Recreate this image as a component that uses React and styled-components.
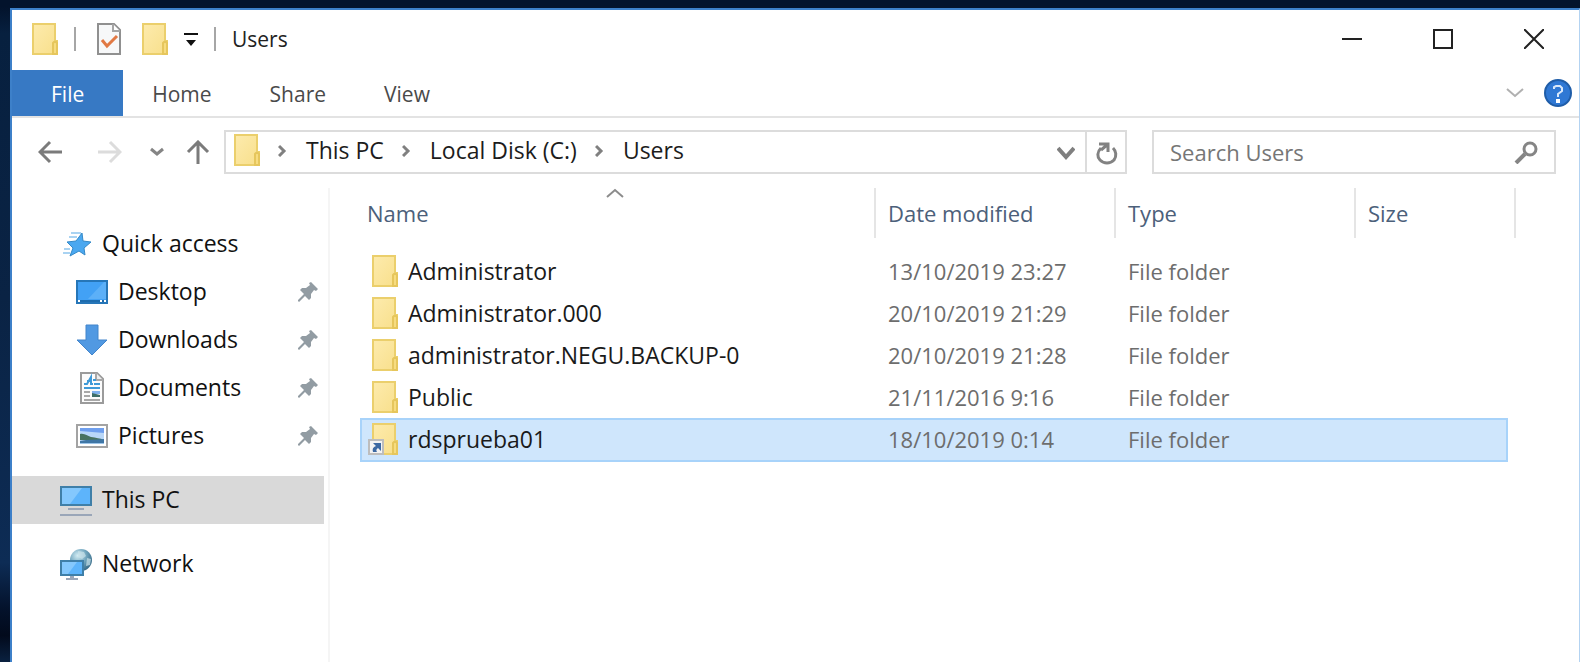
import React, { useState } from "react";
import styled, { createGlobalStyle } from "styled-components";

const GlobalStyle = createGlobalStyle`
  * {
    box-sizing: border-box;
  }
  body {
    margin: 0;
    background: linear-gradient(#03132c 1%, #07203f 5%, #0a2344 45%, #0d2c55 85%, #04122b 92%, #020a1c 96%, #0a2140);
    font-family: "Open Sans", "Noto Sans", sans-serif;
    font-size: 22px;
    line-height: 30px;
    color: #111;
    overflow: hidden;
  }
  button, input {
    font: inherit;
    color: inherit;
    border: none;
    background: none;
    padding: 0;
    margin: 0;
  }
  svg {
    display: block;
    flex: none;
  }
`;

const ExplorerWindow = styled.div`
  display: flex;
  flex-direction: column;
  min-height: calc(100vh - 8px);
  margin: 8px 0 0 10px;
  border-top: 2px solid #3d80c9;
  border-left: 2px solid #3d80c9;
  border-right: 1px solid #b3d3f2;
  background: #fff;
`;

const TitleBar = styled.header`
  display: flex;
  align-items: center;
  height: 60px;
  padding: 0 0 2px 20px;
`;

const QuickTools = styled.div`
  display: flex;
  align-items: center;
  gap: 16px;
`;

const Separator = styled.span`
  width: 2px;
  height: 24px;
  background: #a6a6a6;
`;

const IconButton = styled.button`
  display: flex;
  align-items: center;
  justify-content: center;
  cursor: pointer;
`;

const ToolButton = styled(IconButton)`
  padding: 0 4px;
`;

const Title = styled.h1`
  margin: 0;
  font-size: 21px;
  font-weight: 400;
  color: #222;
`;

const WindowControls = styled.div`
  display: flex;
  margin-left: auto;
  height: 100%;
`;

const ControlButton = styled(IconButton)`
  width: 91px;
  &:hover {
    background: #e5e5e5;
  }
`;

const Ribbon = styled.nav`
  display: flex;
  height: 48px;
  border-bottom: 2px solid #e3e3e3;
`;

const RibbonTab = styled.button`
  padding: ${({ $primary }) => ($primary ? "2px 39px 0" : "2px 29px 0")};
  font-size: 21px;
  color: ${({ $primary }) => ($primary ? "#fff" : "#4a4a4a")};
  background: ${({ $primary }) => ($primary ? "#3779c4" : "transparent")};
  cursor: pointer;
`;

const RibbonTools = styled.div`
  display: flex;
  align-items: center;
  gap: 20px;
  margin-left: auto;
  padding-right: 7px;
`;

const AddressRow = styled.div`
  display: flex;
  align-items: center;
  height: 68px;
  padding: 0 23px 0 26px;
`;

const NavButtons = styled.div`
  display: grid;
  grid-template-columns: 60px 52px 36px 24px;
  align-items: center;
  justify-items: start;
  margin-right: 14px;
`;

const AddressBox = styled.div`
  display: flex;
  flex: 1;
  height: 44px;
  border: 2px solid #dcdcdc;
`;

const Crumbs = styled.div`
  display: flex;
  flex: 1;
  align-items: center;
  gap: 18px;
  padding: 0 8px 4px;
`;

const CrumbLink = styled.a`
  font-size: 23px;
  color: #1c1c1c;
  text-decoration: none;
  white-space: nowrap;
`;

const AddressButton = styled(IconButton)`
  width: 40px;
  padding: 2px 0 0 2px;
  border-left: ${({ $divided }) => ($divided ? "2px solid #dcdcdc" : "none")};
`;

const SearchBox = styled.label`
  display: flex;
  align-items: center;
  width: 404px;
  height: 44px;
  margin-left: 25px;
  padding: 0 16px;
  border: 2px solid #dcdcdc;
`;

const SearchInput = styled.input`
  flex: 1;
  min-width: 0;
  outline: none;
  &::placeholder {
    color: #767676;
    opacity: 1;
  }
`;

const Body = styled.div`
  display: flex;
  flex: 1;
`;

const Sidebar = styled.aside`
  width: 318px;
  margin-top: 2px;
  padding: 32px 4px 0 0;
  border-right: 2px solid #f5f5f5;
  font-size: 23px;
`;

const SideGroup = styled.div`
  margin-bottom: 16px;
`;

const SideItem = styled.button`
  display: flex;
  align-items: center;
  gap: 10px;
  width: 100%;
  height: 48px;
  padding: 0 6px 0 ${({ $nested }) => ($nested ? "64px" : "48px")};
  background: ${({ $active }) => ($active ? "#d9d9d9" : "transparent")};
  text-align: left;
  cursor: pointer;
`;

const SideLabel = styled.span`
  flex: 1;
  padding-bottom: 2px;
`;

const FileArea = styled.main`
  flex: 1;
  padding: 2px 0 0 30px;
`;

const FileTable = styled.table`
  width: 1156px;
  table-layout: fixed;
  border-spacing: 0;
`;

const Column = styled.col`
  width: ${({ $width }) => $width};
`;

const HeaderCell = styled.th`
  padding: 0 0 12px;
  font-weight: 400;
`;

const HeaderButton = styled.button`
  position: relative;
  width: 100%;
  height: 50px;
  padding-left: ${({ $first }) => ($first ? "7px" : "12px")};
  border-right: 2px solid #e5e5e5;
  color: #4c607a;
  text-align: left;
`;

const SortMark = styled.span`
  position: absolute;
  top: 0;
  left: 246px;
`;

const Cell = styled.td`
  height: 42px;
  padding: 0 0 0 12px;
  color: #6d6d6d;
  white-space: nowrap;
`;

const NameCell = styled(Cell)`
  font-size: 23px;
`;

const FileRow = styled.tr`
  cursor: default;
  ${({ $selected }) =>
    $selected &&
    `
    td:not(:last-child) {
      height: 44px;
      padding-bottom: 2px;
      background: #cfe6fc;
      box-shadow: inset 0 2px #a8d3fa, inset 0 -2px #a8d3fa;
    }
    td:first-child {
      box-shadow: inset 2px 2px #a8d3fa, inset 0 -2px #a8d3fa;
    }
    td:nth-child(4) {
      box-shadow: inset -2px 2px #a8d3fa, inset 0 -2px #a8d3fa;
    }
  `}
`;

const FileName = styled.div`
  display: flex;
  align-items: center;
  gap: 10px;
  color: #1a1a1a;
`;

const FolderIcon = ({ shortcut }) => (
  <svg width="26" height="32" viewBox="0 0 26 32" overflow="visible">
    <defs>
      <linearGradient id="folder" x1="0" y1="0" x2="1" y2="1">
        <stop offset="0" stopColor="#fdebad" />
        <stop offset="1" stopColor="#f8df8b" />
      </linearGradient>
    </defs>
    <path d="M1 1h22v17h2v13H1z" fill="url(#folder)" stroke="#ebcf6c" strokeWidth="2" />
    <path d="M21 31V20l1-1h2l1 1v11z" fill="#f7dc80" stroke="#e6c65c" strokeWidth="2" />
    {shortcut && (
      <g>
        <path d="M-3 17h14v14H-3z" fill="#f3f3f3" stroke="#bdbdbd" strokeWidth="2" />
        <path d="M1 20h8v8l-3-3c-2 1-2 3-1 4H1c-1-3 0-5 3-6z" fill="#3c69a3" />
      </g>
    )}
  </svg>
);

const CheckDocIcon = () => (
  <svg width="26" height="32" viewBox="0 0 26 32" fill="none">
    <path d="M2 1h16l6 6v24H2z" fill="#f7f8f9" stroke="#909090" strokeWidth="2" />
    <path d="M17 1v7h7" fill="#fff" stroke="#a5a5a5" strokeWidth="2" />
    <path d="M6 17l5 6L21 13" stroke="#e17944" strokeWidth="3" />
  </svg>
);

const CustomizeIcon = () => (
  <svg width="14" height="14" viewBox="0 0 14 14">
    <path d="M0 1h14v2H0zM2 8h10l-5 6z" fill="#111" />
  </svg>
);

const MinimizeIcon = () => (
  <svg width="20" height="20" viewBox="0 0 20 20">
    <path d="M0 9h20v2H0z" fill="#222" />
  </svg>
);

const MaximizeIcon = () => (
  <svg width="20" height="20" viewBox="0 0 20 20">
    <path d="M1 1h18v18H1z" fill="none" stroke="#222" strokeWidth="2" />
  </svg>
);

const CloseIcon = () => (
  <svg width="20" height="20" viewBox="0 0 20 20">
    <path d="M0 0l20 20M20 0L0 20" stroke="#222" strokeWidth="2" />
  </svg>
);

const HelpIcon = () => (
  <svg width="28" height="28" viewBox="0 0 28 28">
    <circle cx="14" cy="14" r="13" fill="#2f78d4" stroke="#1f5da8" strokeWidth="2" />
    <path
      d="M10 10V8l2-1h4l2 2v3l-4 3v3"
      fill="none"
      stroke="#d9e8fa"
      strokeWidth="2"
    />
    <path d="M12 20h4v4h-4z" fill="#fff" />
  </svg>
);

const Chevron = ({ width, height, color, weight }) => (
  <svg width={width} height={height} viewBox={`0 0 ${width} ${height}`} fill="none">
    <path
      d={`M1 2L${width / 2} ${height - 3}L${width - 1} 2`}
      stroke={color}
      strokeWidth={weight}
    />
  </svg>
);

const CrumbArrow = () => (
  <svg width="10" height="14" viewBox="0 0 10 14" fill="none">
    <path d="M1 3l5 5-5 5" stroke="#808080" strokeWidth="3" />
  </svg>
);

const ArrowIcon = ({ direction, color = "#7b7b7b" }) => {
  const turn = { left: 0, up: 90, right: 180 }[direction];
  return (
    <svg width="24" height="24" viewBox="0 0 24 24" fill="none">
      <path
        d="M12 2L2 12l10 10M2 12h22"
        stroke={color}
        strokeWidth="3"
        transform={`rotate(${turn} 12 12)`}
      />
    </svg>
  );
};

const RefreshIcon = () => (
  <svg width="22" height="24" viewBox="0 0 22 24" fill="none">
    <path
      d="M5 7c-4 4-4 9-1 12 4 4 10 4 14 0 3-4 2-9-1-12"
      stroke="#828282"
      strokeWidth="3"
    />
    <path d="M3 3h9v8M11 4L5 9" stroke="#828282" strokeWidth="3" />
  </svg>
);

const SearchIcon = () => (
  <svg width="24" height="24" viewBox="0 0 24 24" fill="none">
    <circle cx="16" cy="9" r="6" stroke="#858585" strokeWidth="3" />
    <path d="M11 14l-9 9" stroke="#858585" strokeWidth="4" />
  </svg>
);

const StarIcon = () => (
  <svg width="32" height="32" viewBox="0 0 32 32">
    <path d="M11 5h10M9 9h8M4 21h6M3 25h7" stroke="#a9d3f2" strokeWidth="2" />
    <path
      d="M22 5l1 8 8 1-7 6 1 7-6-4-9 5 3-8-6-6 9-1z"
      fill="#4ba8f0"
      stroke="#3489c8"
      strokeWidth="1"
    />
  </svg>
);

const DesktopIcon = () => (
  <svg width="32" height="32" viewBox="0 0 32 32">
    <path d="M1 5h30v22H1z" fill="#42a1f5" stroke="#2676b8" strokeWidth="2" />
    <path d="M12 23L28 6h2v17z" fill="#5cb0f8" />
    <path d="M2 24h28v2H2z" fill="#1d6cae" />
    <path d="M2 24h2v2H2zM24 24h2v2h-2zM28 24h2v2h-2z" fill="#fff" />
  </svg>
);

const DownloadIcon = () => (
  <svg width="32" height="32" viewBox="0 0 32 32">
    <path d="M10 1h12v15h9L16 31 1 16h9z" fill="#5199e2" stroke="#4385cb" />
  </svg>
);

const DocumentIcon = () => (
  <svg width="32" height="32" viewBox="0 0 32 32">
    <path d="M5 1h16l6 6v24H5z" fill="#fcfcfc" stroke="#9b9b9b" strokeWidth="2" />
    <path d="M20 1v7h7" fill="#eee" stroke="#a8a8a8" strokeWidth="2" />
    <path
      d="M8 12h3l4-7v7h2M11 9h4M17 8h3M18 12h6M8 16h16"
      fill="none"
      stroke="#3f9ad8"
      strokeWidth="2"
    />
    <path d="M8 20h6M8 24h6M8 28h16" stroke="#a8a8a8" strokeWidth="2" />
    <path d="M16 19h8v3h-8z" fill="#7fb1ee" />
    <path d="M16 21l8 2v2h-8z" fill="#3e6f6a" />
  </svg>
);

const PictureIcon = () => (
  <svg width="32" height="32" viewBox="0 0 32 32">
    <path d="M1 5h30v22H1z" fill="#fff" stroke="#a3a3a3" strokeWidth="2" />
    <path d="M4 8h24v16H4z" fill="#b9d7f8" />
    <path d="M4 8h24v5L4 11z" fill="#6f9fee" />
    <path d="M4 14c5-1 7 2 11 3 5 1 9 1 13 3H4z" fill="#48725f" />
    <path d="M4 21c8-2 16-1 24-2v5H4z" fill="#3f76a5" />
    <path d="M4 23h24v1H4z" fill="#9cc4e8" />
  </svg>
);

const ComputerIcon = () => (
  <svg width="32" height="32" viewBox="0 0 32 32">
    <path d="M1 3h30v18H1z" fill="#5db4fb" stroke="#3f7fa8" strokeWidth="2" />
    <path d="M2 4h20L10 20H2z" fill="#84c8fd" />
    <path d="M8 25h16M0 31h32" stroke="#9aa6b8" strokeWidth="2" />
  </svg>
);

const NetworkIcon = () => (
  <svg width="32" height="32" viewBox="0 0 32 32">
    <defs>
      <radialGradient id="globe" cx=".35" cy=".3" r=".8">
        <stop offset="0" stopColor="#d3edf4" />
        <stop offset=".5" stopColor="#70a5bd" />
        <stop offset="1" stopColor="#2f617f" />
      </radialGradient>
    </defs>
    <circle cx="21" cy="12" r="11" fill="url(#globe)" />
    <path d="M18 3l6 1 2 4-4 3-4-2zM27 10l4 1-1 6-4 1z" fill="#c9e3ea" opacity=".7" />
    <path d="M1 13h22v14H1z" fill="#5db4fb" stroke="#3f7fa8" strokeWidth="2" />
    <path d="M2 14h15L8 26H2z" fill="#84c8fd" />
    <path d="M10 28h4v2h-4zM6 30h12v2H6z" fill="#9aa6b8" />
  </svg>
);

const PinIcon = () => (
  <svg width="20" height="20" viewBox="0 0 20 20">
    <path d="M13 0l7 7-2 2-2-1-3 4v4l-2 2-4-4-6 6-1-1 0-1 6-6-4-4 2-2h4l4-3-1-2z" fill="#929ca3" />
  </svg>
);

const quickItems = [
  { label: "Desktop", Icon: DesktopIcon },
  { label: "Downloads", Icon: DownloadIcon },
  { label: "Documents", Icon: DocumentIcon },
  { label: "Pictures", Icon: PictureIcon },
];

const files = [
  { name: "Administrator", date: "13/10/2019 23:27" },
  { name: "Administrator.000", date: "20/10/2019 21:29" },
  { name: "administrator.NEGU.BACKUP-0", date: "20/10/2019 21:28" },
  { name: "Public", date: "21/11/2016 9:16" },
  { name: "rdsprueba01", date: "18/10/2019 0:14", shortcut: true },
];

const App = () => {
  const [search, setSearch] = useState("");
  const [place, setPlace] = useState("This PC");
  const [selected, setSelected] = useState("rdsprueba01");

  return (
    <>
      <GlobalStyle />
      <ExplorerWindow>
        <TitleBar>
          <QuickTools>
            <FolderIcon />
            <Separator />
            <ToolButton aria-label="Properties">
              <CheckDocIcon />
            </ToolButton>
            <IconButton aria-label="New folder">
              <FolderIcon />
            </IconButton>
            <IconButton aria-label="Customize toolbar">
              <CustomizeIcon />
            </IconButton>
            <Separator />
            <Title>Users</Title>
          </QuickTools>
          <WindowControls>
            <ControlButton aria-label="Minimize">
              <MinimizeIcon />
            </ControlButton>
            <ControlButton aria-label="Maximize">
              <MaximizeIcon />
            </ControlButton>
            <ControlButton aria-label="Close">
              <CloseIcon />
            </ControlButton>
          </WindowControls>
        </TitleBar>

        <Ribbon>
          <RibbonTab $primary>File</RibbonTab>
          <RibbonTab>Home</RibbonTab>
          <RibbonTab>Share</RibbonTab>
          <RibbonTab>View</RibbonTab>
          <RibbonTools>
            <IconButton aria-label="Expand ribbon">
              <Chevron width={18} height={12} color="#b0b0b0" weight={2} />
            </IconButton>
            <IconButton aria-label="Help">
              <HelpIcon />
            </IconButton>
          </RibbonTools>
        </Ribbon>

        <AddressRow>
          <NavButtons>
            <IconButton aria-label="Back">
              <ArrowIcon direction="left" />
            </IconButton>
            <IconButton aria-label="Forward">
              <ArrowIcon direction="right" color="#dcdcdc" />
            </IconButton>
            <IconButton aria-label="Recent locations">
              <Chevron width={14} height={10} color="#858585" weight={3} />
            </IconButton>
            <IconButton aria-label="Up">
              <ArrowIcon direction="up" />
            </IconButton>
          </NavButtons>
          <AddressBox>
            <Crumbs>
              <FolderIcon />
              <CrumbArrow />
              <CrumbLink href="#pc">This PC</CrumbLink>
              <CrumbArrow />
              <CrumbLink href="#c">Local Disk (C:)</CrumbLink>
              <CrumbArrow />
              <CrumbLink href="#users">Users</CrumbLink>
            </Crumbs>
            <AddressButton aria-label="Previous locations">
              <Chevron width={18} height={14} color="#7f7f7f" weight={4} />
            </AddressButton>
            <AddressButton $divided aria-label="Refresh">
              <RefreshIcon />
            </AddressButton>
          </AddressBox>
          <SearchBox>
            <SearchInput
              type="text"
              aria-label="Search Users"
              placeholder="Search Users"
              value={search}
              onChange={(event) => setSearch(event.target.value)}
            />
            <SearchIcon />
          </SearchBox>
        </AddressRow>

        <Body>
          <Sidebar>
            <SideGroup>
              <SideItem onClick={() => setPlace("Quick access")} $active={place === "Quick access"}>
                <StarIcon />
                <SideLabel>Quick access</SideLabel>
              </SideItem>
              {quickItems.map(({ label, Icon }) => (
                <SideItem
                  key={label}
                  $nested
                  $active={place === label}
                  onClick={() => setPlace(label)}
                >
                  <Icon />
                  <SideLabel>{label}</SideLabel>
                  <PinIcon />
                </SideItem>
              ))}
            </SideGroup>
            <SideGroup>
              <SideItem $active={place === "This PC"} onClick={() => setPlace("This PC")}>
                <ComputerIcon />
                <SideLabel>This PC</SideLabel>
              </SideItem>
            </SideGroup>
            <SideItem $active={place === "Network"} onClick={() => setPlace("Network")}>
              <NetworkIcon />
              <SideLabel>Network</SideLabel>
            </SideItem>
          </Sidebar>

          <FileArea>
            <FileTable>
              <colgroup>
                <Column $width="516px" />
                <Column $width="240px" />
                <Column $width="240px" />
                <Column $width="152px" />
                <Column $width="8px" />
              </colgroup>
              <thead>
                <tr>
                  <HeaderCell>
                    <HeaderButton $first>
                      Name
                      <SortMark>
                        <svg width="18" height="10" viewBox="0 0 18 10" fill="none">
                          <path d="M1 9l8-7 8 7" stroke="#8c8c8c" strokeWidth="2" />
                        </svg>
                      </SortMark>
                    </HeaderButton>
                  </HeaderCell>
                  <HeaderCell>
                    <HeaderButton>Date modified</HeaderButton>
                  </HeaderCell>
                  <HeaderCell>
                    <HeaderButton>Type</HeaderButton>
                  </HeaderCell>
                  <HeaderCell colSpan={2}>
                    <HeaderButton>Size</HeaderButton>
                  </HeaderCell>
                </tr>
              </thead>
              <tbody>
                {files.map((file) => (
                  <FileRow
                    key={file.name}
                    $selected={selected === file.name}
                    onClick={() => setSelected(file.name)}
                  >
                    <NameCell>
                      <FileName>
                        <FolderIcon shortcut={file.shortcut} />
                        {file.name}
                      </FileName>
                    </NameCell>
                    <Cell>{file.date}</Cell>
                    <Cell>File folder</Cell>
                    <Cell />
                    <td />
                  </FileRow>
                ))}
              </tbody>
            </FileTable>
          </FileArea>
        </Body>
      </ExplorerWindow>
    </>
  );
};

export default App;
